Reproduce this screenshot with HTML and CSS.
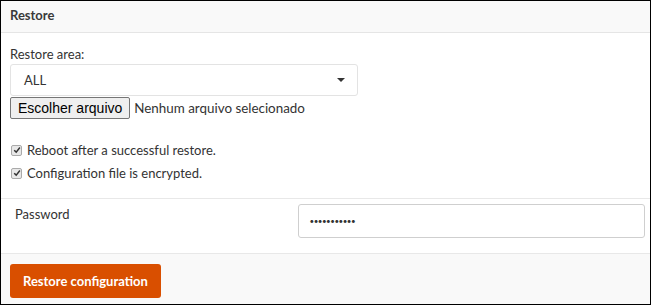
FILE: index.html
```html
<!DOCTYPE html>
<html>
<head>
<meta charset="utf-8">
<link rel="stylesheet" href="styles.css">
</head>
<body>
<div class="panel">
  <div class="panel-head">Restore</div>
  <div class="panel-body">
    <div class="label">Restore area:</div>
    <div class="select"><span>ALL</span><span class="caret"></span></div>
    <div class="file-row"><span class="file-btn">Escolher arquivo</span><span class="file-name">Nenhum arquivo selecionado</span></div>
    <div class="checks">
      <label class="check"><span class="box"><svg viewBox="0 0 10 10" width="8" height="8"><path d="M1.5 5.2 L4 7.6 L8.6 1.8" fill="none" stroke="#333" stroke-width="1.8"/></svg></span>Reboot after a successful restore.</label>
      <label class="check"><span class="box"><svg viewBox="0 0 10 10" width="8" height="8"><path d="M1.5 5.2 L4 7.6 L8.6 1.8" fill="none" stroke="#333" stroke-width="1.8"/></svg></span>Configuration file is encrypted.</label>
    </div>
  </div>
  <div class="pw-row">
    <div class="pw-label">Password</div>
    <div class="pw-input"><span class="dots">•••••••••••</span></div>
  </div>
  <div class="panel-foot">
    <span class="btn">Restore configuration</span>
  </div>
</div>
</body>
</html>
```

FILE: styles.css
```css
* { box-sizing: border-box; }
body { margin: 0; font-family: Lato, "Open Sans", sans-serif; font-size: 13px; color: #333; }
.panel { width: 651px; height: 305px; border: 1px solid #000; display: flex; flex-direction: column; background: #fff; }
.panel-head { height: 32px; background: #f9f9f9; border-bottom: 1px solid #e5e5e5; padding: 6px 9px 0; font-weight: 700; color: #3a3a3a; }
.panel-body { padding: 12px 9px 0; }
.label { height: 19px; line-height: 19px; }
.select { width: 348px; height: 32px; border: 1px solid #e3e3e3; border-radius: 3px; display: flex; align-items: center; justify-content: space-between; padding: 0 12px 0 13px; color: #333; }
.caret { width: 0; height: 0; border-left: 4px solid transparent; border-right: 4px solid transparent; border-top: 4px solid #333; }
.file-row { display: flex; align-items: center; margin-top: 1px; }
.file-btn { font-family: "Liberation Sans", Arial, sans-serif; font-size: 14px; background: #efefef; border: 1px solid #767676; border-radius: 2px; height: 22px; line-height: 20px; padding: 0 7px; color: #000; }
.file-name { margin-left: 4px; font-size: 13.4px; }
.checks { margin-top: 22px; display: flex; flex-direction: column; gap: 5px; }
.check { display: flex; align-items: center; height: 18px; }
.box { width: 11px; height: 11px; border: 1px solid #aaa; border-radius: 2px; background: #e8e8e8; margin: 0 5px 0 1px; display: flex; align-items: center; justify-content: center; }
.pw-row { margin-top: 16px; border-top: 1px solid #e8e8e8; height: 55px; display: flex; padding: 5px 5px 0 14px; }
.pw-label { width: 283px; padding-top: 2px; }
.pw-input { width: 348px; height: 34px; border: 1px solid #cfcfcf; border-radius: 3px; display: flex; align-items: center; padding-left: 11px; }
.dots { font-size: 8px; letter-spacing: -0.5px; color: #333; }
.panel-foot { flex: 1; background: #f9f9f9; border-top: 1px solid #e8e8e8; padding: 10px 9px 0; }
.btn { display: inline-block; background: #d94f00; color: #fff; height: 34px; line-height: 34px; padding: 0 13px; border-radius: 3px; font-weight: 700; }
```
